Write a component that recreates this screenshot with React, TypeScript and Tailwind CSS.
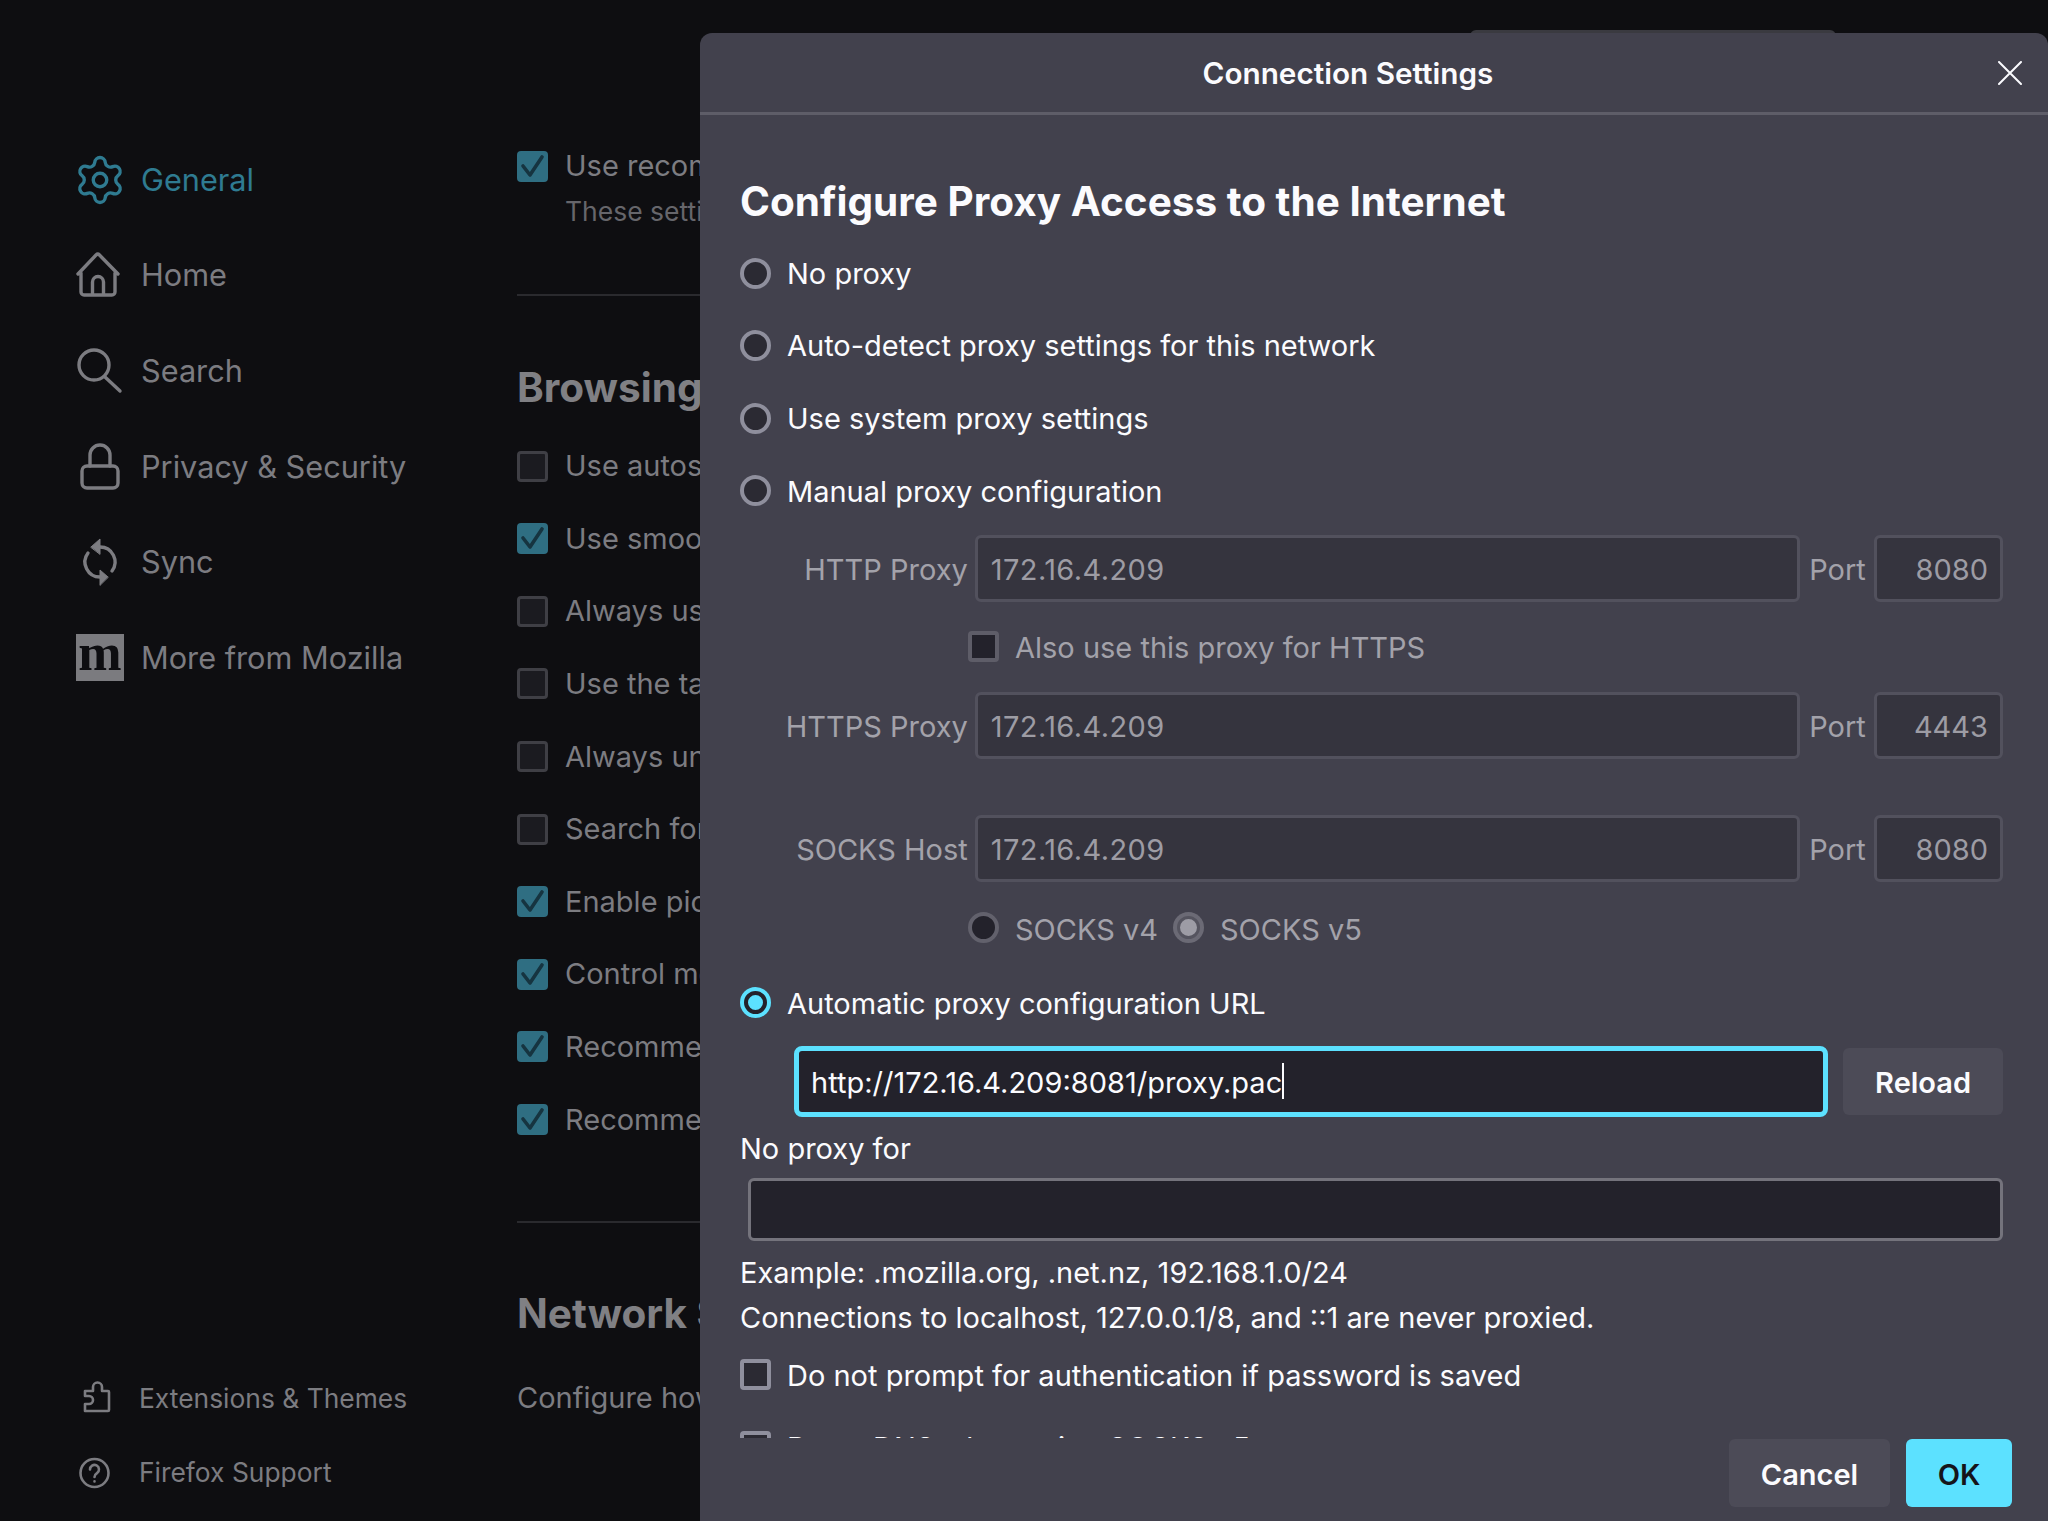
import React from "react";
import { Settings } from "lucide-react";

type NavItem = { label: string; icon: React.ReactNode; active?: boolean };

const Svg: React.FC<{ children: React.ReactNode; strokeWidth?: number }> = ({ children, strokeWidth = 3.4 }) => (
  <svg viewBox="0 0 48 48" className="w-[48px] h-[48px] overflow-visible" fill="none" stroke="currentColor" strokeWidth={strokeWidth} strokeLinecap="round" strokeLinejoin="round">
    {children}
  </svg>
);

const navItems: NavItem[] = [
  {
    label: "General",
    active: true,
    icon: <Settings size={54} strokeWidth={1.5} className="-mx-[3px]" />,
  },
  {
    label: "Home",
    icon: (
      <Svg>
        <path d="M2 23 L20 4 a2.5 2.5 0 0 1 3.5 0 L42 23 M5 22 V41 a3 3 0 0 0 3 3 H36 a3 3 0 0 0 3-3 V22 M16.5 44 V31 a5.5 5.5 0 0 1 11 0 V44" />
      </Svg>
    ),
  },
  {
    label: "Search",
    icon: (
      <Svg>
        <circle cx="18" cy="18" r="15" />
        <path d="M29 30 L44 44" />
      </Svg>
    ),
  },
  {
    label: "Privacy & Security",
    icon: (
      <Svg>
        <rect x="6" y="23" width="36" height="22" rx="5" />
        <path d="M14 23 V12 a10 10 0 0 1 20 0 V23" />
      </Svg>
    ),
  },
  {
    label: "Sync",
    icon: (
      <Svg>
        <path d="M24 9 A15 15 0 0 1 36 33 M24 39 A15 15 0 0 1 12 15" />
        <path d="M15 9 L24 1 V16 Z M32 39 L24 32 V47 Z" fill="currentColor" strokeWidth={1} />
      </Svg>
    ),
  },
  {
    label: "More from Mozilla",
    icon: (
      <div className="w-[48px] h-[47px] bg-[#7b7b7f] flex items-center justify-center">
        <span className="font-['Liberation_Serif',serif] font-bold text-[52px] leading-none text-[#0e0e11] -mt-[10px]">m</span>
      </div>
    ),
  },
];

const mainRows: { text: string; checked: boolean }[] = [
  { text: "Use autoscrolling", checked: false },
  { text: "Use smooth scrolling", checked: true },
  { text: "Always use the cursor keys to navigate within pages", checked: false },
  { text: "Use the tab key to focus links", checked: false },
  { text: "Always underline links", checked: false },
  { text: "Search for text when you start typing", checked: false },
  { text: "Enable picture-in-picture video controls", checked: true },
  { text: "Control media via keyboard, headset, or virtual interface", checked: true },
  { text: "Recommend extensions as you browse", checked: true },
  { text: "Recommend features as you browse", checked: true },
];

const DimCheckbox: React.FC<{ checked: boolean }> = ({ checked }) =>
  checked ? (
    <div className="w-[31px] h-[31px] shrink-0 rounded-[4px] bg-[#2f6e82]">
      <svg viewBox="0 0 31 31" className="w-full h-full" fill="none" stroke="#163440" strokeWidth="3.6" strokeLinecap="round" strokeLinejoin="round">
        <path d="M6 15 L13 24 L25 6" />
      </svg>
    </div>
  ) : (
    <div className="w-[31px] h-[31px] shrink-0 rounded-[4px] bg-[#1b1b20] border-[3px] border-[#3f3f45]" />
  );

const Checkbox: React.FC<{ disabled?: boolean }> = ({ disabled }) => (
  <div className={disabled ? "w-[31px] h-[31px] shrink-0 rounded-[4px] bg-[#23222b] border-[4px] border-[#5e5d68]" : "w-[31px] h-[31px] shrink-0 rounded-[4px] bg-[#2b2a33] border-[4px] border-[#8f8f9d]"} />
);

const Radio: React.FC<{ state?: "idle" | "off" | "offOn" | "on" }> = ({ state = "idle" }) => {
  if (state === "on") {
    return (
      <div className="w-[31px] h-[31px] shrink-0 rounded-full bg-[#5ce1ff] p-[4px]">
        <div className="w-full h-full rounded-full bg-[#5ce1ff] border-[4px] border-[#23222b]" />
      </div>
    );
  }
  if (state === "offOn") {
    return (
      <div className="w-[31px] h-[31px] shrink-0 rounded-full bg-[#6b6a75] p-[4px]">
        <div className="w-full h-full rounded-full bg-[#9d9ca5] border-[3px] border-[#55545f]" />
      </div>
    );
  }
  if (state === "off") {
    return <div className="w-[31px] h-[31px] shrink-0 rounded-full bg-[#23222b] border-[4px] border-[#62616c]" />;
  }
  return <div className="w-[31px] h-[31px] shrink-0 rounded-full bg-[#2b2a33] border-[4px] border-[#8f8f9d]" />;
};

const OptionRow: React.FC<{ label: string; state?: "idle" | "on" }> = ({ label, state }) => (
  <div className="flex items-center gap-[16px] h-[40px]">
    <Radio state={state} />
    <span className="whitespace-nowrap pt-[1px]">{label}</span>
  </div>
);

const ProxyRow: React.FC<{ label: string; host: string; port: string }> = ({ label, host, port }) => (
  <div className="flex items-center text-[#a3a2aa]">
    <div className="w-[228px] pt-[3px] text-right whitespace-nowrap">{label}</div>
    <div className="ml-[7px] w-[826px] h-[67px] flex items-center pl-[13px] pt-[3px] bg-[#35343e] border-[3px] border-[#52515d] rounded-[6px] text-[#9d9ca4] tracking-[0.4px]">{host}</div>
    <div className="ml-[9px] w-[65px] pt-[3px]">Port</div>
    <div className="w-[129px] h-[67px] flex items-center justify-end pr-[12px] pt-[3px] bg-[#35343e] border-[3px] border-[#52515d] rounded-[6px] text-[#9d9ca4]">{port}</div>
  </div>
);

const App: React.FC = () => {
  return (
    <div className="relative flex w-[2048px] h-[1521px] overflow-hidden bg-[#0e0e11] font-['Inter',sans-serif] text-[29px] text-[#7c7c81]">
      <aside className="w-[517px] shrink-0 flex flex-col justify-between pl-[76px] pt-[132px] pb-[11px]">
        <nav className="flex flex-col text-[30.7px]">
          {navItems.map((item) => (
            <div key={item.label} className={item.active ? "h-[95.6px] flex items-center gap-[17px] text-[#2f7b91]" : "h-[95.6px] flex items-center gap-[17px]"}>
              <div className="w-[48px] flex justify-center">{item.icon}</div>
              <span className="whitespace-nowrap">{item.label}</span>
            </div>
          ))}
        </nav>
        <div className="flex flex-col text-[26.4px]">
          <div className="h-[75px] flex items-center gap-[15px]">
            <Svg strokeWidth={2.6}>
              <path d="M9 37 V30 H13 a4 4 0 0 0 0-8 H9 V17 H17 V13 a4.5 4.5 0 0 1 9 0 V17 H32 a1 1 0 0 1 1 1 V36 a1 1 0 0 1-1 1 Z" />
            </Svg>
            <span className="pt-[3px]">Extensions &amp; Themes</span>
          </div>
          <div className="h-[75px] flex items-center gap-[15px]">
            <Svg strokeWidth={2.6}>
              <circle cx="18.5" cy="24" r="14" />
              <path d="M14 20.5 a4.5 4.5 0 1 1 7 3.6 c-1.7 1.1-2.5 2.2-2.5 3.9 M18.5 32.4 v0.1" />
            </Svg>
            <span className="pt-[1px]">Firefox Support</span>
          </div>
        </div>
      </aside>

      <main className="flex-1 flex flex-col pt-[30px] whitespace-nowrap">
        <div className="ml-[953px] w-[366px] h-[60px] shrink-0 bg-[#23222b] border-[3px] border-[#3a3a40] rounded-[6px]" />
        <div className="mt-[60px] h-[32px] flex items-center gap-[17px]">
          <DimCheckbox checked />
          <span>Use recommended performance settings</span>
        </div>
        <div className="mt-[10px] ml-[48px] text-[26.5px] text-[#66666b]">These settings are tailored to your computer's hardware and operating system.</div>
        <div className="mt-[62px] w-[1400px] border-t-[2px] border-[#2a2a2e]" />
        <h2 className="mt-[65px] h-[56px] flex items-center text-[40.5px] font-bold text-[#808084]">Browsing</h2>
        <div className="mt-[13px] flex flex-col">
          {mainRows.map((row) => (
            <div key={row.text} className="h-[72.6px] flex items-center gap-[17px]">
              <DimCheckbox checked={row.checked} />
              <span>{row.text}</span>
            </div>
          ))}
        </div>
        <div className="mt-[65px] w-[1400px] border-t-[2px] border-[#2a2a2e]" />
        <h2 className="mt-[64px] h-[56px] flex items-center text-[40.5px] font-bold text-[#808084]">Network Settings</h2>
        <div className="mt-[33px]">Configure how Firefox connects to the internet.</div>
      </main>

      <div className="absolute left-[700px] top-[33px] right-0 bottom-0 flex flex-col bg-[#42414d] rounded-t-[12px] text-[#fbfbfe]">
        <header className="h-[82px] shrink-0 flex items-center border-b-[3px] border-[#5e5d68]">
          <div className="flex-1 text-center text-[29.7px] font-semibold pt-[1px]">Connection Settings</div>
          <button className="w-[52px] pl-[2px] flex">
            <svg viewBox="0 0 24 24" className="w-[24px] h-[24px]" stroke="#fbfbfe" strokeWidth="2" strokeLinecap="round">
              <path d="M1 1 L23 23 M23 1 L1 23" />
            </svg>
          </button>
        </header>

        <div className="h-[1323px] overflow-hidden pl-[40px] pr-[45px] flex flex-col">
          <h1 className="mt-[59px] h-[56px] shrink-0 flex items-center text-[40.5px] font-bold whitespace-nowrap">Configure Proxy Access to the Internet</h1>
          <div className="mt-[23px] flex flex-col gap-[32.6px]">
            <OptionRow label="No proxy" />
            <OptionRow label="Auto-detect proxy settings for this network" />
            <OptionRow label="Use system proxy settings" />
            <OptionRow label="Manual proxy configuration" />
          </div>

          <div className="mt-[24px]">
            <ProxyRow label="HTTP Proxy" host="172.16.4.209" port="8080" />
          </div>
          <div className="mt-[25px] ml-[228px] h-[40px] flex items-center gap-[16px] text-[#a3a2aa]">
            <Checkbox disabled />
            <span className="pt-[1px]">Also use this proxy for HTTPS</span>
          </div>
          <div className="mt-[25px]">
            <ProxyRow label="HTTPS Proxy" host="172.16.4.209" port="4443" />
          </div>
          <div className="mt-[56px]">
            <ProxyRow label="SOCKS Host" host="172.16.4.209" port="8080" />
          </div>
          <div className="mt-[26px] ml-[228px] h-[40px] flex items-center text-[#a3a2aa]">
            <Radio state="off" />
            <span className="ml-[16px] w-[158px] pt-[3px]">SOCKS v4</span>
            <Radio state="offOn" />
            <span className="ml-[16px] pt-[3px]">SOCKS v5</span>
          </div>

          <div className="mt-[35px]">
            <OptionRow label="Automatic proxy configuration URL" state="on" />
          </div>
          <div className="mt-[23px] ml-[54px] flex items-center gap-[15px]">
            <div className="w-[1035px] h-[71px] flex items-center pl-[12px] bg-[#23222b] border-[5px] border-[#5ce1ff] rounded-[8px]">
              <span className="pt-[2px]">http://172.16.4.209:8081/proxy.pac</span>
              <span className="w-[2px] h-[36px] bg-[#fbfbfe]" />
            </div>
            <button className="w-[160px] h-[67px] rounded-[6px] bg-[#4c4b57] font-semibold pt-[2px]">Reload</button>
          </div>

          <div className="mt-[12px] h-[40px] flex items-center">No proxy for</div>
          <div className="mt-[9px] ml-[8px] h-[63px] shrink-0 bg-[#23222b] border-[3px] border-[#74737c] rounded-[6px]" />
          <div className="mt-[12px] h-[40px] flex items-center whitespace-nowrap">Example: .mozilla.org, .net.nz, 192.168.1.0/24</div>
          <div className="mt-[5px] h-[40px] flex items-center whitespace-nowrap">Connections to localhost, 127.0.0.1/8, and ::1 are never proxied.</div>
          <div className="mt-[17px] h-[40px] flex items-center gap-[16px] shrink-0">
            <Checkbox />
            <span className="pt-[2px]">Do not prompt for authentication if password is saved</span>
          </div>
          <div className="mt-[32px] h-[40px] flex items-center gap-[16px] shrink-0">
            <Checkbox />
            <span className="pt-[2px]">Proxy DNS when using SOCKS v5</span>
          </div>
        </div>

        <footer className="flex-1 flex justify-end items-start gap-[16px] pr-[36px] pt-[1px]">
          <button className="w-[161px] h-[68px] rounded-[6px] bg-[#4c4b57] font-semibold pt-[3px]">Cancel</button>
          <button className="w-[106px] h-[68px] rounded-[6px] bg-[#5ce1ff] text-[#15141a] font-semibold pt-[3px]">OK</button>
        </footer>
      </div>
    </div>
  );
};

export default App;
